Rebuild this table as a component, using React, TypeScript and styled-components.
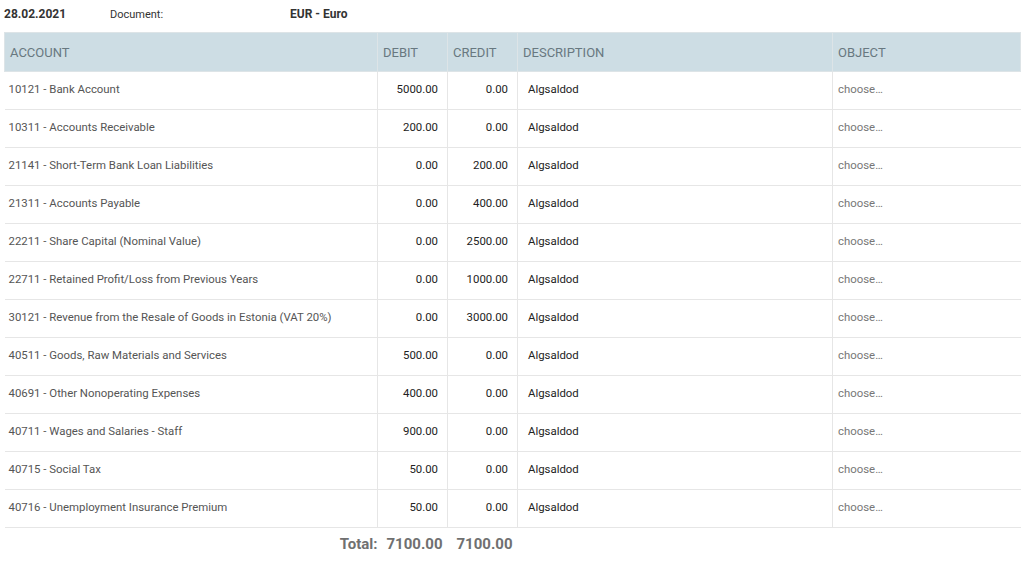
import React from "react";
import styled, { createGlobalStyle } from "styled-components";

const Global = createGlobalStyle`
  html, body { margin: 0; padding: 0; background: #fff; }
  body { font-family: Roboto, "Liberation Sans", Arial, sans-serif; }
`;

const Page = styled.div`
  padding: 0 3px 0 4px;
  width: 1017px;
`;

const TopBar = styled.div`
  display: flex;
  align-items: baseline;
  height: 32px;
  padding-top: 7px;
  box-sizing: border-box;
  color: #333;
`;

const DateText = styled.span`
  font-weight: 700;
  font-size: 12px;
  width: 106px;
`;

const DocLabel = styled.span`
  font-size: 11px;
  width: 180px;
`;

const Currency = styled.span`
  font-weight: 700;
  font-size: 12px;
`;

const Table = styled.table`
  border-collapse: collapse;
  width: 1017px;
  table-layout: fixed;
`;

const Th = styled.th<{ $w?: number }>`
  background: #cddde4;
  color: #687880;
  font-weight: 400;
  font-size: 13px;
  text-align: left;
  height: 39px;
  padding: 1px 5px 0;
  border: 1px solid #dde4e7;
  box-sizing: border-box;
  ${(p) => (p.$w ? `width: ${p.$w}px;` : "")}
`;

const Td = styled.td<{ $num?: boolean; $tone?: "dark" | "muted" | "normal" }>`
  height: 38px;
  box-sizing: border-box;
  font-size: 11.4px;
  padding: 0 ${(p) => (p.$num ? "9px" : "5px")} 3px 5px;
  text-align: ${(p) => (p.$num ? "right" : "left")};
  color: ${(p) =>
    p.$tone === "dark" ? "#222" : p.$tone === "muted" ? "#777" : "#555"};
  border-bottom: 1px solid #e6e6e6;
  border-left: 1px solid #e6e6e6;
  &:first-child { border-left: none; padding-left: 4px; }
`;

const DescTd = styled(Td)`
  padding-left: 10px;
`;

const TotalRow = styled.tr`
  td {
    font-size: 15px;
    font-weight: 700;
    color: #707070;
    height: 30px;
    padding-top: 0;
    border: none;
  }
`;

const TotalCell = styled.td<{ $pr?: number }>`
  text-align: right;
  padding: 0 ${(p) => p.$pr ?? 5}px 0 0;
`;

const rows: [string, string, string][] = [
  ["10121 - Bank Account", "5000.00", "0.00"],
  ["10311 - Accounts Receivable", "200.00", "0.00"],
  ["21141 - Short-Term Bank Loan Liabilities", "0.00", "200.00"],
  ["21311 - Accounts Payable", "0.00", "400.00"],
  ["22211 - Share Capital (Nominal Value)", "0.00", "2500.00"],
  ["22711 - Retained Profit/Loss from Previous Years", "0.00", "1000.00"],
  ["30121 - Revenue from the Resale of Goods in Estonia (VAT 20%)", "0.00", "3000.00"],
  ["40511 - Goods, Raw Materials and Services", "500.00", "0.00"],
  ["40691 - Other Nonoperating Expenses", "400.00", "0.00"],
  ["40711 - Wages and Salaries - Staff", "900.00", "0.00"],
  ["40715 - Social Tax", "50.00", "0.00"],
  ["40716 - Unemployment Insurance Premium", "50.00", "0.00"],
];

export default function App() {
  return (
    <Page>
      <Global />
      <TopBar>
        <DateText>28.02.2021</DateText>
        <DocLabel>Document:</DocLabel>
        <Currency>EUR - Euro</Currency>
      </TopBar>
      <Table>
        <thead>
          <tr>
            <Th $w={373}>ACCOUNT</Th>
            <Th $w={70}>DEBIT</Th>
            <Th $w={70}>CREDIT</Th>
            <Th $w={315}>DESCRIPTION</Th>
            <Th>OBJECT</Th>
          </tr>
        </thead>
        <tbody>
          {rows.map(([acc, d, c]) => (
            <tr key={acc}>
              <Td>{acc}</Td>
              <Td $num $tone="dark">{d}</Td>
              <Td $num $tone="dark">{c}</Td>
              <DescTd $tone="dark">Algsaldod</DescTd>
              <Td $tone="muted">choose…</Td>
            </tr>
          ))}
          <TotalRow>
            <TotalCell $pr={0}>Total:</TotalCell>
            <TotalCell $pr={5}>7100.00</TotalCell>
            <TotalCell $pr={5}>7100.00</TotalCell>
            <td />
            <td />
          </TotalRow>
        </tbody>
      </Table>
    </Page>
  );
}
